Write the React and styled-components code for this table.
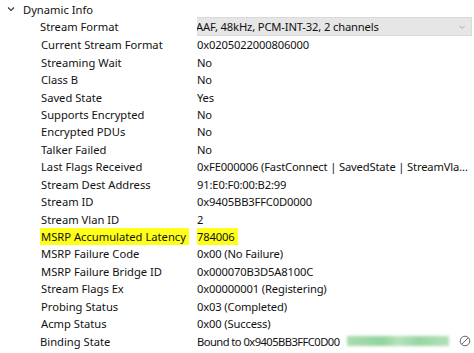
import React from 'react'
import styled, {createGlobalStyle} from 'styled-components'

const GlobalStyle = createGlobalStyle`
  html, body {
    margin: 0;
    padding: 0;
    background: #fff;
  }
  body {
    font-family: 'Noto Sans', 'Open Sans', sans-serif;
    font-size: 11.2px;
    color: #111;
  }
`

const Panel = styled.div`
  width: 474px;
  height: 353px;
  overflow: hidden;
  background: #fff;
`

const GroupHeader = styled.div`
  display: flex;
  align-items: center;
  height: 17px;
  padding: 1px 0 0 7px;
  box-sizing: border-box;
  gap: 8px;
`

const Chevron = styled.svg`
  width: 8px;
  height: 8px;
  flex: none;
`

const PropGrid = styled.div`
  display: grid;
  grid-template-columns: 157px 1fr;
  padding-left: 40px;
`

const Cell = styled.div`
  display: flex;
  align-items: center;
  height: ${p => (p.$tall ? '19px' : '17.45px')};
  min-width: 0;
  white-space: nowrap;
  overflow: hidden;
  letter-spacing: ${p => (p.$value ? '-0.15px' : '0')};
`

const Mark = styled.span`
  background: ${p => (p.$on ? '#ffff1a' : 'transparent')};
  padding: 1px 3px 1px ${p => (p.$value ? '4px' : '1px')};
  margin-left: ${p => (p.$value ? '-4px' : '0')};
  line-height: 15px;
`

const Combo = styled.div`
  display: flex;
  align-items: center;
  justify-content: space-between;
  flex: 1;
  height: 19px;
  margin: 0 2px 0 -4px;
  padding: 0 5px 0 2px;
  background: #e6e6e6;
  border: 1px solid #d9d9d9;
  box-sizing: border-box;
`

const Row = styled.div`
  display: flex;
  align-items: center;
  flex: 1;
  & > * {
    flex: none;
  }
`

const BoundText = styled.span`
  letter-spacing: -0.55px;
`

const Blur = styled.span`
  display: inline-block;
  width: 102px;
  height: 10px;
  margin-left: 7px;
  background: linear-gradient(90deg, #a9dcb1, #92d39c 35%, #b5e2bb 50%, #98d6a2 70%, #b2e1b8);
  filter: blur(1.6px);
`

const NoIcon = styled.svg`
  width: 12px;
  height: 12px;
  margin-left: 10px;
`

const rows = [
  ['Current Stream Format', '0x0205022000806000'],
  ['Streaming Wait', 'No'],
  ['Class B', 'No'],
  ['Saved State', 'Yes'],
  ['Supports Encrypted', 'No'],
  ['Encrypted PDUs', 'No'],
  ['Talker Failed', 'No'],
  ['Last Flags Received', '0xFE000006 (FastConnect | SavedState | StreamVla...'],
  ['Stream Dest Address', '91:E0:F0:00:B2:99'],
  ['Stream ID', '0x9405BB3FFC0D0000'],
  ['Stream Vlan ID', '2'],
  ['MSRP Accumulated Latency', '784006', true],
  ['MSRP Failure Code', '0x00 (No Failure)'],
  ['MSRP Failure Bridge ID', '0x000070B3D5A8100C'],
  ['Stream Flags Ex', '0x00000001 (Registering)'],
  ['Probing Status', '0x03 (Completed)'],
  ['Acmp Status', '0x00 (Success)']
]

export default function App() {
  return (
    <Panel>
      <GlobalStyle />
      <GroupHeader>
        <Chevron viewBox="0 0 8 8">
          <path d="M1 2.5 L4 5.5 L7 2.5" fill="none" stroke="#333" strokeWidth="1.1" />
        </Chevron>
        <span>Dynamic Info</span>
      </GroupHeader>
      <PropGrid>
        <Cell $tall>Stream Format</Cell>
        <Cell $tall $value>
          <Combo>
            <span>AAF, 48kHz, PCM-INT-32, 2 channels</span>
            <Chevron viewBox="0 0 8 8">
              <path d="M1.5 3 L4 5.5 L6.5 3" fill="none" stroke="#aaa" strokeWidth="1" />
            </Chevron>
          </Combo>
        </Cell>
        {rows.map(([label, value, hi]) => (
          <React.Fragment key={label}>
            <Cell>
              <Mark $on={hi}>{label}</Mark>
            </Cell>
            <Cell $value>
              <Mark $on={hi} $value>{value}</Mark>
            </Cell>
          </React.Fragment>
        ))}
        <Cell>Binding State</Cell>
        <Cell $value>
          <Row>
            <BoundText>Bound to 0x9405BB3FFC0D00</BoundText>
            <Blur />
            <NoIcon viewBox="0 0 12 12">
              <circle cx="6" cy="6" r="4.8" fill="none" stroke="#666" strokeWidth="1" />
              <path d="M2.8 9.2 L9.2 2.8" stroke="#666" strokeWidth="1" />
            </NoIcon>
          </Row>
        </Cell>
      </PropGrid>
    </Panel>
  )
}
